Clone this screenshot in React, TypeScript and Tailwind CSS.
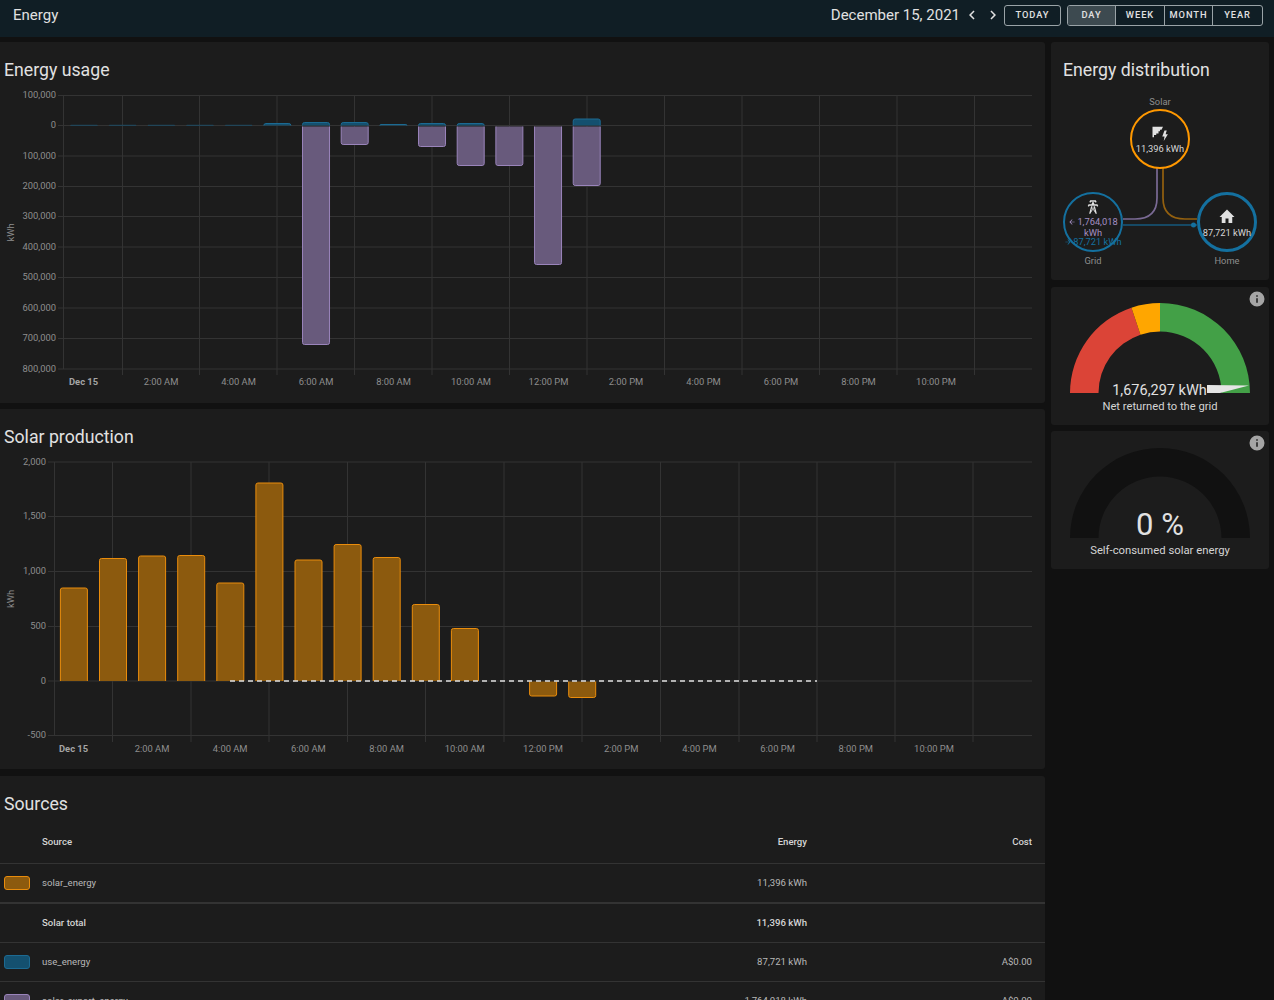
const hours = Array.from({ length: 24 }, (_, i) => i);

const usageGrid = [95.5, 125.5, 156, 186.5, 216.5, 247, 277.5, 308, 338.5, 369];
const usageTicks = ["100,000", "0", "100,000", "200,000", "300,000", "400,000", "500,000", "600,000", "700,000", "800,000"];
const usageVert = [122.5, 199.5, 277, 354.5, 432, 509.5, 587, 664.5, 742, 819.5, 897, 974.5];
const usageBlue: (number | null)[] = [125, 125, 125, 125, 125, 123.5, 122.5, 122.5, 124.5, 123.5, 123.5, null, null, 119];
const usagePurple: Record<number, number> = { 6: 344.5, 7: 144.5, 9: 146.5, 10: 165.5, 11: 165.5, 12: 264.5, 13: 185.5 };

const solarGrid = [462, 516.5, 571.5, 626.5, 681, 735.5];
const solarTicks = ["2,000", "1,500", "1,000", "500", "0", "-500"];
const solarVert = [112.5, 191, 269, 347.5, 425.5, 504, 582, 660.5, 739, 817, 895, 973];
const solarTops = [588, 558.5, 556, 555.5, 583, 483, 560, 544.5, 557.5, 604.5, 628.5];
const solarBottoms: Record<number, number> = { 12: 696, 13: 697.5 };

const timeLabels = ["2:00 AM", "4:00 AM", "6:00 AM", "8:00 AM", "10:00 AM", "12:00 PM", "2:00 PM", "4:00 PM", "6:00 PM", "8:00 PM", "10:00 PM"];

const font = "font-['Roboto',sans-serif]";
const arrowLeft = "M20,11V13H8L13.5,18.5L12.08,19.92L4.16,12L12.08,4.08L13.5,5.5L8,11H20Z";
const arrowRight = "M4,11V13H16L10.5,18.5L11.92,19.92L19.84,12L11.92,4.08L10.5,5.5L16,11H4Z";

function bottomRounded(x: number, y0: number, y1: number, w: number) {
  return `M${x} ${y0}V${y1 - 2}Q${x} ${y1} ${x + 2} ${y1}H${x + w - 2}Q${x + w} ${y1} ${x + w} ${y1 - 2}V${y0}`;
}

function topRounded(x: number, y0: number, y1: number, w: number) {
  const r = Math.min(2, y0 - y1);
  return `M${x} ${y0}V${y1 + r}Q${x} ${y1} ${x + r} ${y1}H${x + w - r}Q${x + w} ${y1} ${x + w} ${y1 + r}V${y0}`;
}

function UsageChart() {
  const center = (i: number) => 84 + i * 38.67;
  return (
    <svg viewBox="0 86 1045 317" className="block w-[1045px] h-[317px]">
      {usageGrid.map((y) => (
        <line key={y} x1="58" x2="1032" y1={y} y2={y} stroke="#333333" />
      ))}
      <line x1="63.5" x2="63.5" y1="95" y2="369" stroke="#333333" />
      {usageVert.map((x) => (
        <line key={x} x1={x} x2={x} y1="95" y2="375" stroke="#333333" />
      ))}
      {usageTicks.map((t, i) => (
        <text key={i} x="56" y={usageGrid[i] + 2.5} textAnchor="end" fontSize="9.4" fill="#8e8e8e">{t}</text>
      ))}
      <text transform="translate(14 232.5) rotate(-90)" textAnchor="middle" fontSize="9.4" fill="#8e8e8e">kWh</text>
      {usageBlue.map((top, i) => top !== null && (
        <path key={i} d={topRounded(center(i) - 13.5, 125.5, top, 27)} fill="#14506f" stroke="#1c6a92" strokeOpacity={i < 5 ? 0.25 : 1} />
      ))}
      {hours.filter((h) => usagePurple[h]).map((h) => (
        <path key={h} d={bottomRounded(center(h) - 13.5, 126.5, usagePurple[h], 27)} fill="#685a7c" stroke="#9a84bb" />
      ))}
      <text x="69" y="385" fontSize="9.4" fontWeight="700" fill="#a5a5a5">Dec 15</text>
      {timeLabels.map((t, i) => (
        <text key={t} x={161 + i * 77.5} y="385" textAnchor="middle" fontSize="9.4" fill="#8e8e8e">{t}</text>
      ))}
    </svg>
  );
}

function SolarChart() {
  const center = (i: number) => 73.9 + i * 39.1;
  return (
    <svg viewBox="0 453 1045 316" className="block w-[1045px] h-[316px]">
      {solarGrid.map((y) => (
        <line key={y} x1="48" x2="1032" y1={y} y2={y} stroke="#333333" />
      ))}
      <line x1="54.5" x2="54.5" y1="462" y2="736" stroke="#333333" />
      {solarVert.map((x) => (
        <line key={x} x1={x} x2={x} y1="462" y2="742" stroke="#333333" />
      ))}
      {solarTicks.map((t, i) => (
        <text key={t} x="46" y={solarGrid[i] + 2.5} textAnchor="end" fontSize="9.4" fill="#8e8e8e">{t}</text>
      ))}
      <text transform="translate(14 599) rotate(-90)" textAnchor="middle" fontSize="9.4" fill="#8e8e8e">kWh</text>
      {solarTops.map((top, i) => (
        <path key={i} d={topRounded(center(i) - 13.5, 681, top, 27)} fill="#8c5a0e" stroke="#e98c0c" />
      ))}
      {hours.filter((h) => solarBottoms[h]).map((h) => (
        <path key={h} d={bottomRounded(center(h) - 13.5, 681.5, solarBottoms[h], 27)} fill="#8c5a0e" stroke="#e98c0c" />
      ))}
      <line x1="230" x2="817" y1="681" y2="681" stroke="#e1e1e1" strokeWidth="1.5" strokeDasharray="5 4" />
      <text x="59" y="752" fontSize="9.4" fontWeight="700" fill="#a5a5a5">Dec 15</text>
      {timeLabels.map((t, i) => (
        <text key={t} x={152 + i * 78.2} y="752" textAnchor="middle" fontSize="9.4" fill="#8e8e8e">{t}</text>
      ))}
    </svg>
  );
}

function SourceRow({ color, border, name, energy, cost, bold, thick }: { color?: string; border?: string; name: string; energy: string; cost?: string; bold?: boolean; thick?: boolean }) {
  return (
    <div className={`grid grid-cols-[42px_1fr_120px_225px] items-center pr-[13px] text-[9.6px] ${bold ? "font-medium text-[#d4d4d4]" : "text-[#b8b8b8]"} ${thick ? "h-[40px] border-b-2 border-[#333333]" : "h-[39px] border-b border-[#333333]"}`}>
      <div className="pl-1">
        {color && <div className={`w-[26px] h-[14px] rounded-[3px] border ${color} ${border}`} />}
      </div>
      <div>{name}</div>
      <div className="text-right">{energy}</div>
      <div className="text-right">{cost}</div>
    </div>
  );
}

function InfoIcon() {
  return (
    <svg viewBox="0 0 24 24" className="absolute top-[3px] right-[3px] w-[18px] h-[18px]">
      <path fill="#a5a5a5" d="M13,9H11V7H13M13,17H11V11H13M12,2A10,10 0 0,0 2,12A10,10 0 0,0 12,22A10,10 0 0,0 22,12A10,10 0 0,0 12,2Z" />
    </svg>
  );
}

function arc(a0: number, a1: number) {
  const pt = (r: number, a: number) => `${90 + r * Math.cos((a * Math.PI) / 180)} ${90 - r * Math.sin((a * Math.PI) / 180)}`;
  return `M${pt(90, a0)}A90 90 0 0 1 ${pt(90, a1)}L${pt(61.5, a1)}A61.5 61.5 0 0 0 ${pt(61.5, a0)}Z`;
}

function Circle({ className, children }: { className: string; children: React.ReactNode }) {
  return (
    <div className={`relative z-10 w-[60px] h-[60px] rounded-full flex flex-col items-center bg-[#1c1c1c] ${className}`}>
      {children}
    </div>
  );
}

function Distribution() {
  return (
    <div className="relative mx-3 h-[186px] pt-[10px] text-[9.3px] text-[#d8d8d8]">
      <svg viewBox="0 0 194 186" className="absolute inset-0 w-[194px] h-[186px]">
        <path d="M94 82V112Q94 133 72 133H60" fill="none" stroke="#7a6a94" strokeWidth="1.7" />
        <path d="M100 82V112Q100 133 122 133H134" fill="none" stroke="#93600f" strokeWidth="1.7" />
        <line x1="60" x2="134" y1="139" y2="139" stroke="#14587c" strokeWidth="1.7" />
        <circle cx="130.5" cy="139" r="2.5" fill="#14709f" />
      </svg>
      <div className="flex flex-col items-center">
        <div className="h-[13px] leading-[12px] text-[#8e8e8e]">Solar</div>
        <Circle className="border-2 border-[#ff9800] pt-[12px]">
          <svg viewBox="0 0 24 24" className="w-[18px] h-[18px]">
            <path fill="#e1e1e1" d="M2 5H16L14 9H12V11H10V14H7V16H4V19H2ZM18 10H21L19.5 15H22.5L17 24L18 18H15Z" />
          </svg>
          <div className="leading-[12px] mt-[2px] whitespace-nowrap">11,396 kWh</div>
        </Circle>
      </div>
      <div className="flex justify-between mt-[23px]">
        <div className="flex flex-col items-center">
          <Circle className="border-2 border-[#14709f] pt-[5px]">
            <svg viewBox="0 0 24 24" className="w-[16px] h-[16px]">
              <path fill="#e1e1e1" d="M8.28,5.45L6.5,4.55L7.76,2H16.24L17.5,4.55L15.72,5.45L15,4H9L8.28,5.45M18.62,8H14.09L13.3,5H10.7L9.91,8H5.38L4.1,10.55L5.89,11.44L6.62,10H17.38L18.1,11.44L19.89,10.55L18.62,8M17.77,22H15.7L15.46,21.1L12,15.9L8.53,21.1L8.3,22H6.23L9.12,11H11.19L10.83,12.35L12,14.1L13.16,12.35L12.81,11H14.88L17.77,22M11.4,15L10.5,13.65L9.32,18.13L11.4,15M14.68,18.13L13.5,13.65L12.6,15L14.68,18.13Z" />
            </svg>
            <div className="mt-[1px] text-center text-[#a48fc3] leading-[11px] whitespace-nowrap">
              <svg viewBox="0 0 24 24" className="inline-block w-[8px] h-[8px] mr-[1px] align-[-1px]"><path fill="#a48fc3" d={arrowLeft} /></svg>
              1,764,018<br />kWh
            </div>
            <div className="absolute top-[43px] text-[#14709f] leading-[10px] whitespace-nowrap">
              <svg viewBox="0 0 24 24" className="inline-block w-[8px] h-[8px] mr-[1px] align-[-1px]"><path fill="#14709f" d={arrowRight} /></svg>
              87,721 kWh
            </div>
          </Circle>
          <div className="mt-[3px] leading-[12px] text-[#8e8e8e]">Grid</div>
        </div>
        <div className="flex flex-col items-center">
          <Circle className="border-[3px] border-[#14709f] pt-[13px]">
            <svg viewBox="0 0 24 24" className="w-[18px] h-[18px]">
              <path fill="#e1e1e1" d="M10,20V14H14V20H19V12H22L12,2L2,12H5V20H10Z" />
            </svg>
            <div className="leading-[12px] mt-[1px] whitespace-nowrap">87,721 kWh</div>
          </Circle>
          <div className="mt-[3px] leading-[12px] text-[#8e8e8e]">Home</div>
        </div>
      </div>
    </div>
  );
}

export default function App() {
  return (
    <div className={`${font} h-[1000px] overflow-hidden bg-[#111111] text-[#e1e1e1]`}>
      <header className="h-[37px] bg-[#101e25] flex items-center pl-[13px] pr-[11px] pb-[7px]">
        <div className="text-[15px] mr-auto">Energy</div>
        <div className="text-[15px]">December 15, 2021</div>
        <svg viewBox="0 0 24 24" className="w-[18px] h-[18px] ml-[3px]"><path fill="#e1e1e1" d="M15.41,16.58L10.83,12L15.41,7.41L14,6L8,12L14,18L15.41,16.58Z" /></svg>
        <svg viewBox="0 0 24 24" className="w-[18px] h-[18px] ml-[3px]"><path fill="#e1e1e1" d="M8.59,16.58L13.17,12L8.59,7.41L10,6L16,12L10,18L8.59,16.58Z" /></svg>
        <button className="ml-[2px] w-[57px] h-[21px] rounded-[3px] border border-[#9aa3a7] text-[9.3px] font-medium tracking-[0.1em]">TODAY</button>
        <div className="ml-[6px] flex h-[21px] rounded-[3px] border border-[#9aa3a7] text-[9.3px] font-medium tracking-[0.1em] overflow-hidden">
          <div className="w-[48px] flex items-center justify-center bg-[#3d4a50] border-r border-[#9aa3a7]">DAY</div>
          <div className="w-[49px] flex items-center justify-center border-r border-[#9aa3a7]">WEEK</div>
          <div className="w-[48px] flex items-center justify-center border-r border-[#9aa3a7]">MONTH</div>
          <div className="w-[49px] flex items-center justify-center">YEAR</div>
        </div>
      </header>

      <div className="flex mt-[5px]">
        <div className="w-[1045px] flex flex-col">
          <section className="bg-[#1c1c1c] rounded-r-[3px] h-[361px]">
            <h2 className="h-[44px] pt-4 pl-1 text-[17.7px] leading-6">Energy usage</h2>
            <UsageChart />
          </section>
          <section className="bg-[#1c1c1c] rounded-r-[3px] h-[360px] mt-[6px]">
            <h2 className="h-[44px] pt-4 pl-1 text-[17.7px] leading-6">Solar production</h2>
            <SolarChart />
          </section>
          <section className="bg-[#1c1c1c] rounded-r-[3px] mt-[7px]">
            <h2 className="h-[45px] pt-[16px] pl-1 text-[17.7px] leading-6">Sources</h2>
            <div className="grid grid-cols-[42px_1fr_120px_225px] items-center h-[43px] pr-[13px] text-[9.6px] font-medium text-[#d4d4d4] border-b border-[#333333]">
              <div />
              <div>Source</div>
              <div className="text-right">Energy</div>
              <div className="text-right">Cost</div>
            </div>
            <SourceRow color="bg-[#8c5a0e]" border="border-[#e98c0c]" name="solar_energy" energy="11,396 kWh" thick />
            <SourceRow name="Solar total" energy="11,396 kWh" bold />
            <SourceRow color="bg-[#14506f]" border="border-[#1c6a92]" name="use_energy" energy="87,721 kWh" cost="A$0.00" />
            <SourceRow color="bg-[#685a7c]" border="border-[#9a84bb]" name="solar_export_energy" energy="1,764,018 kWh" cost="A$0.00" />
          </section>
        </div>

        <div className="w-[218px] ml-[6px] flex flex-col">
          <section className="bg-[#1c1c1c] rounded-[3px] h-[238px]">
            <h2 className="h-[44px] pt-4 pl-3 text-[17.7px] leading-6">Energy distribution</h2>
            <Distribution />
          </section>
          <section className="relative bg-[#1c1c1c] rounded-[3px] h-[138px] mt-[7px] pt-4 text-center">
            <InfoIcon />
            <svg viewBox="0 0 180 90" className="block mx-auto w-[180px] h-[90px]">
              <path d={arc(180, 108.5)} fill="#db4437" />
              <path d={arc(108.5, 90)} fill="#ffa600" />
              <path d={arc(90, 0)} fill="#43a047" />
              <polygon points="137,82 179,82.5 150,90 137,90" fill="#e5e5e5" />
            </svg>
            <div className="-mt-[12px] text-[14.5px] leading-5 pr-[1px] relative">1,676,297 kWh</div>
            <div className="-mt-[1px] text-[11.2px] leading-[14px] text-[#d4d4d4]">Net returned to the grid</div>
          </section>
          <section className="relative bg-[#1c1c1c] rounded-[3px] h-[138px] mt-[6px] pt-[17px] text-center">
            <InfoIcon />
            <svg viewBox="0 0 180 90" className="block mx-auto w-[180px] h-[90px]">
              <path d={arc(180, 0)} fill="#111111" />
            </svg>
            <div className="-mt-[29px] text-[31px] leading-8 relative">0 %</div>
            <div className="mt-[3px] text-[11.3px] leading-[14px] text-[#d4d4d4]">Self-consumed solar energy</div>
          </section>
        </div>
      </div>
    </div>
  );
}
